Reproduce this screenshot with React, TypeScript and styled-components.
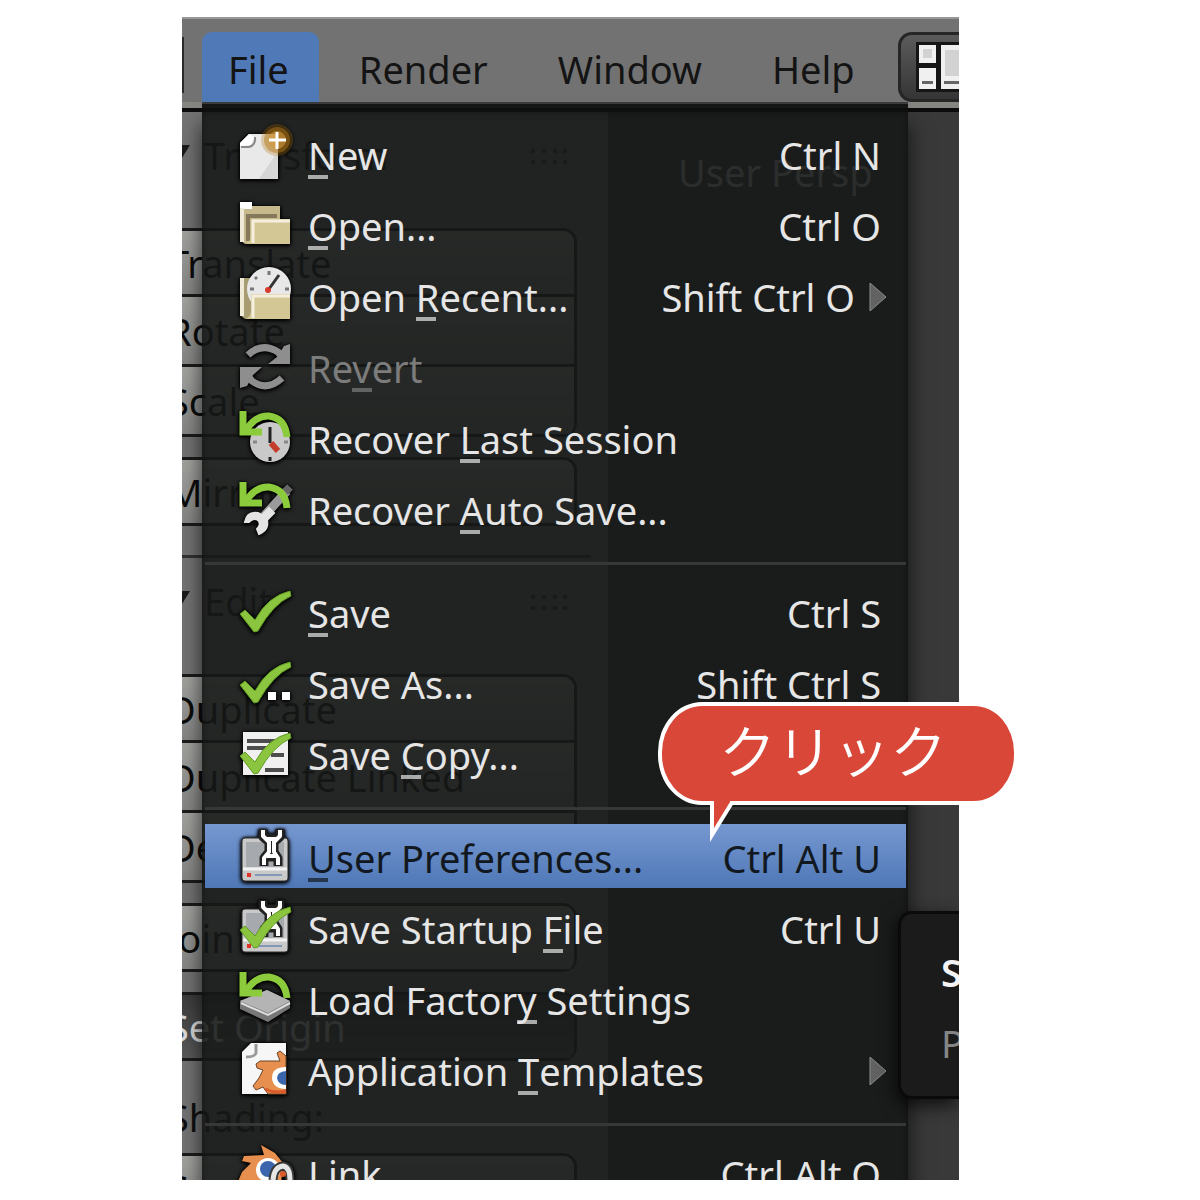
import React from "react";
import styled, { createGlobalStyle } from "styled-components";

const GlobalStyle = createGlobalStyle`
  *, *::before, *::after { box-sizing: border-box; }
  body { margin: 0; background: #fff; }
  button { border: 0; background: none; padding: 0; margin: 0; color: inherit; font: inherit; text-align: left; }
`;

const Page = styled.main`
  min-height: 100vh;
  padding: 17px 241px 20px 182px;
  background: #fff;
  font-family: "Noto Sans", "Open Sans", sans-serif;
  font-size: 38px;
  line-height: 52px;
  white-space: nowrap;
`;

const Stage = styled.div`
  position: relative;
`;

const AppWindow = styled.div`
  position: relative;
  display: flex;
  flex-direction: column;
  height: calc(100vh - 37px);
  overflow: hidden;
  background: #393939;
`;

/* ---------- header ---------- */

const Header = styled.header`
  position: relative;
  z-index: 2;
  display: flex;
  align-items: flex-end;
  flex: none;
  height: 85px;
  background: #727272;
  border-top: 2px solid #979797;
`;

const HeaderEdge = styled.div`
  flex: none;
  height: 10px;
  background: #858582;
  border-bottom: 4px solid #0c0c0c;
`;

const EditorSwitch = styled.div`
  width: 20px;
  height: 56px;
  margin-bottom: 9px;
  border-left: 2px solid #2a2a2a;
`;

const MenuBar = styled.nav`
  display: flex;
  gap: 14px;
`;

const MenuSlot = styled.div`
  position: relative;
`;

const MenuTab = styled.button<{ $open?: boolean }>`
  height: 70px;
  padding: 4px 30px 0 26px;
  color: #141414;
  background: ${(p) => (p.$open ? "#5079b8" : "transparent")};
  border-radius: 10px 10px 0 0;
`;

const LayoutPicker = styled.button`
  display: flex;
  align-items: center;
  width: 61px;
  height: 70px;
  margin-left: auto;
  padding-left: 15px;
  overflow: hidden;
  border: 3px solid #262626;
  border-right: 0;
  border-radius: 14px 0 0 14px;
  background: linear-gradient(#5a5b5a, #353535);
`;

const LayoutIcon = styled.svg`
  flex: none;
  width: 60px;
  height: 50px;
`;

/* ---------- file menu ---------- */

const Menu = styled.ul`
  position: absolute;
  top: 100%;
  left: 0;
  display: flex;
  flex-direction: column;
  gap: 7px;
  width: 706px;
  margin: 0;
  padding: 17px 2px 40px 3px;
  list-style: none;
  background: rgba(22, 24, 23, 0.88);
  border-top: 2px solid #3a3b3a;
  box-shadow: 0 22px 20px rgba(0, 0, 0, 0.7), inset 0 8px 6px rgba(0, 0, 0, 0.4);
`;

const MenuRow = styled.button<{ $active?: boolean }>`
  display: flex;
  align-items: center;
  width: 100%;
  height: 64px;
  padding: 0 19px 0 32px;
  color: ${(p) => (p.$active ? "#121820" : "#e6e6e6")};
  background: ${(p) => (p.$active ? "linear-gradient(#7698d0, #4f78b7)" : "transparent")};
  &:disabled { color: #7c7c7c; }
`;

const Label = styled.span`
  flex: 1;
  padding: 4px 0 0 15px;
`;

const Hotkey = styled.u`
  position: relative;
  text-decoration: none;
  &::after {
    content: "";
    position: absolute;
    left: 0;
    bottom: 2px;
    width: 20px;
    height: 4px;
    background: currentColor;
    opacity: 0.7;
  }
`;

const Shortcut = styled.kbd<{ $submenu?: boolean }>`
  padding: 4px ${(p) => (p.$submenu ? 0 : 6)}px 0 0;
  font: inherit;
`;

const Divider = styled.li`
  height: 3px;
  margin: 15px 0 7px;
  background: #363737;
`;

const IconBox = styled.svg`
  flex: none;
  width: 56px;
  height: 56px;
  overflow: visible;
  filter: drop-shadow(0 1px 2px #000) drop-shadow(0 0 1px #000);
`;

const ArrowBox = styled.svg`
  flex: none;
  width: 32px;
  height: 38px;
`;

/* ---------- workspace behind the menu ---------- */

const Workspace = styled.div`
  display: flex;
  flex: 1;
  min-height: 0;
`;

const ToolShelf = styled.aside`
  flex: none;
  width: 466px;
  margin-left: -40px;
  padding-right: 31px;
  color: #101010;
  background: #727372;
`;

const ShelfTitle = styled.h2`
  display: flex;
  align-items: center;
  gap: 14px;
  height: 86px;
  margin: 0 0 30px;
  padding: 0 8px 0 26px;
  font: inherit;
`;

const ShelfTitleText = styled.span`
  flex: 1;
`;

const ShelfLine = styled.hr`
  height: 3px;
  margin: 29px -14px 0 0;
  border: 0;
  background: #333;
`;

const ToolGroup = styled.div`
  margin-bottom: 20px;
  overflow: hidden;
  border: solid #1c1c1c;
  border-width: 3px 3px 0;
  border-radius: 14px;
`;

const Tool = styled.button<{ $dark?: boolean }>`
  display: block;
  width: 100%;
  height: 70px;
  padding-left: 23px;
  color: ${(p) => (p.$dark ? "#dcdcdc" : "#0c0c0c")};
  background: ${(p) => (p.$dark ? "linear-gradient(#3c3c3c, #5a5a5a)" : "linear-gradient(#a3a3a0, #868785)")};
  border-bottom: 3px solid #1c1c1c;
  &:first-child { height: 66px; }
`;

const ShelfCaption = styled.p`
  margin: 0;
  padding: 10px 0 10px 26px;
`;

const Viewport = styled.section`
  flex: 1;
  padding: 34px 0 0 70px;
  color: #c4c4c4;
  background: #393939;
`;

/* ---------- overlays ---------- */

const Tooltip = styled.div`
  position: absolute;
  z-index: 3;
  right: 0;
  top: 894px;
  width: 61px;
  height: 188px;
  padding: 32px 0 0 40px;
  overflow: hidden;
  color: #f4f4f4;
  background: #1b1b1b;
  border: 3px solid #0a0a0a;
  border-right: 0;
  border-radius: 14px 0 0 14px;
  box-shadow: -2px 6px 18px rgba(0, 0, 0, 0.75);
`;

const TooltipNote = styled.p`
  margin: 19px 0 0;
  color: #858585;
`;

const TooltipTitle = styled.p`
  margin: 0;
  font-weight: 600;
`;

const Callout = styled.div`
  position: absolute;
  z-index: 4;
  left: 476px;
  top: 685px;
  width: 360px;
  height: 103px;
  padding-right: 10px;
  color: #fff;
  background: #d94738;
  border: 4px solid #fff;
  border-radius: 44px / 50px;
  font-family: "Noto Sans CJK JP", sans-serif;
  font-size: 57px;
  font-weight: 350;
  line-height: 84px;
  text-align: center;
`;

const CalloutTail = styled.svg`
  position: absolute;
  left: 48px;
  top: 93px;
  width: 26px;
  height: 44px;
`;

/* ---------- icon drawings ---------- */

const Tick = () => (
  <path d="M3 31 L8 27 L18 37 Q31 13 53 8 L54 13 Q36 21 21 48 L17 49 Z" fill="#8bc53f" stroke="#5f9a22" strokeWidth="1" />
);

const BackArrow = () => (
  <g fill="none" stroke="#8bcb3c" strokeWidth="7">
    <path d="M9 21 Q19 6 32 7 Q48 9 50 28" />
    <path d="M6 2 V23 H25" />
    <path d="M3 26 V12 L20 26 Z" fill="#8bcb3c" stroke="none" />
  </g>
);

const FolderFront = ({ y }: { y: number }) => (
  <g>
    <path d={`M14 ${y} H53 V${y + 25} H8 Q14 ${y + 23} 14 ${y + 16} Z`} fill="#d3c795" />
    <path d={`M16 ${y + 24} V${y + 2} H53`} fill="none" stroke="#f6efdf" strokeWidth="3" />
  </g>
);

const Drive = () => (
  <g>
    <rect x="5" y="10" width="46" height="43" rx="3" fill="#c9c9c9" stroke="#333" strokeWidth="1" />
    <rect x="9" y="14" width="38" height="25" fill="#a6a9ad" />
    <path d="M6 41 H50" stroke="#f2f2f2" strokeWidth="3" />
    <path d="M18 47 H45" stroke="#8398b8" strokeWidth="2" />
    <rect x="10" y="45" width="4" height="4" fill="#e03226" />
  </g>
);

const UprightWrench = () => (
  <g fill="none" strokeLinejoin="round">
    <path d="M26 1 V9 L32 14 V24 L27 30 V38 M43 1 V9 L37 14 V24 L41 30 V38 M27 10 H42 M28 29 H41" stroke="#222" strokeWidth="9" />
    <path d="M26 2 V8 L32 14 V24 L27 30 V37 M43 2 V8 L37 14 V24 L41 30 V37 M29 11 H40 M30 28 H39" stroke="#fff" strokeWidth="4" />
  </g>
);

const icons: Record<string, React.ReactNode> = {
  fresh: (
    <g>
      <path d="M12 9 H41 V54 H3 V18 Z" fill="#e9e9e9" />
      <path d="M22 54 L41 26 V54 Z" fill="#d6d6d6" />
      <path d="M12 9 L17 12 L14 20 L3 21 V18 Z" fill="#fff" />
      <path d="M18 12 Q19 20 12 22 H4" fill="none" stroke="#8a8a8a" strokeWidth="2" />
      <circle cx="40" cy="15" r="16" fill="#b57a1c" opacity="0.3" />
      <circle cx="40" cy="15" r="13" fill="#b57a1c" opacity="0.5" />
      <circle cx="40" cy="15" r="9" fill="#d19a3e" opacity="0.6" />
      <path d="M32 15 H49 M40 7 V24" stroke="#fff" strokeWidth="3" />
    </g>
  ),
  folder: (
    <g>
      <path d="M3 7 H15 V10 H43 V40 L8 48 L3 44 Z" fill="#c6b98c" />
      <rect x="3" y="6" width="12" height="7" fill="#fff" />
      <path d="M5 12 V46" stroke="#efe9d8" strokeWidth="4" />
      <path d="M11 45 V20 H40" fill="none" stroke="#84795a" strokeWidth="4" />
      <FolderFront y={23} />
    </g>
  ),
  recent: (
    <g>
      <path d="M3 11 H14 V50 L8 52 L3 48 Z" fill="#a89c72" />
      <path d="M5 11 V49" stroke="#efe9d8" strokeWidth="4" />
      <circle cx="32" cy="22" r="22" fill="#e8e8e8" />
      <path d="M32 4 V8 M18 10 L20 12 M48 22 H52 M13 22 H17" stroke="#777" strokeWidth="3" />
      <path d="M32 22 L42 8" stroke="#333" strokeWidth="3" />
      <circle cx="31" cy="23" r="3" fill="#d63b2b" />
      <FolderFront y={27} />
    </g>
  ),
  revert: (
    <g fill="none" stroke="#8e8e8e" strokeWidth="7">
      <path d="M11 17 Q25 4 41 14 L46 20" />
      <path d="M53 6 V26 H31 L40 19 L47 8 Z" fill="#8e8e8e" stroke="none" />
      <path d="M45 40 Q30 54 15 43 L10 37" />
      <path d="M3 50 V29 H25 L16 37 L10 48 Z" fill="#8e8e8e" stroke="none" />
    </g>
  ),
  session: (
    <g>
      <circle cx="33" cy="33" r="20" fill="#c9c9c9" />
      <path d="M33 18 V34 M33 48 V52" stroke="#222" strokeWidth="3" />
      <path d="M16 33 H20 M47 33 H51" stroke="#888" strokeWidth="3" />
      <path d="M34 34 L41 42" stroke="#c43c2c" strokeWidth="6" />
      <BackArrow />
    </g>
  ),
  autosave: (
    <g>
      <path d="M27 36 L50 11" stroke="#9a9a9a" strokeWidth="9" />
      <path d="M48 12 L53 7" stroke="#666" strokeWidth="8" />
      <path d="M8 42 Q10 31 21 33 L25 35 L32 28 L37 33 L30 40 Q32 50 22 54 L20 49 Q25 44 21 40 Q16 37 12 42 Z" fill="#e4e4e4" stroke="#e4e4e4" strokeWidth="2" />
      <BackArrow />
    </g>
  ),
  save: <Tick />,
  saveAs: (
    <g>
      <rect x="31" y="38" width="8" height="8" fill="#fff" />
      <rect x="45" y="38" width="8" height="8" fill="#fff" />
      <Tick />
    </g>
  ),
  saveCopy: (
    <g>
      <rect x="6" y="7" width="45" height="43" fill="#f0f0f0" />
      <path d="M10 16 H38 M10 23 H30 M34 30 H47 M28 45 H47" stroke="#4d4d4d" strokeWidth="4" />
      <Tick />
    </g>
  ),
  prefs: (
    <g>
      <Drive />
      <UprightWrench />
    </g>
  ),
  startup: (
    <g>
      <Drive />
      <UprightWrench />
      <Tick />
    </g>
  ),
  factory: (
    <g>
      <path d="M3 31 L30 20 L53 31 V38 L31 52 L3 39 Z" fill="#777" />
      <path d="M3 31 L30 20 L53 31 L31 43 Z" fill="#b4b4b4" />
      <path d="M4 33 L31 45 L53 33" fill="none" stroke="#dedede" strokeWidth="2" />
      <BackArrow />
    </g>
  ),
  templates: (
    <g>
      <path d="M14 2 H49 V53 H5 V11 Z" fill="#f6f6f6" />
      <path d="M19 3 V12 Q18 16 9 16" fill="none" stroke="#999" strokeWidth="3" />
      <path d="M49 15 L43 10 L40 12 L43 20 L23 20 L19 23 L20 27 L26 29 L22 37 L16 45 L19 49 L26 46 L31 53 H49 Z" fill="#e78f4e" stroke="#6b4428" strokeWidth="1" />
      <path d="M28 48 Q38 53 49 50" fill="none" stroke="#d95a2b" strokeWidth="3" />
      <path d="M49 26 Q35 26 35 37 Q36 48 49 48 Z" fill="#fff" />
      <path d="M49 30 Q40 31 40 37 Q41 44 49 44 Z" fill="#3b66ab" />
    </g>
  ),
  link: (
    <g>
      <path d="M24 1 L38 9 L46 19 L44 40 H0 L5 28 L14 19 L5 17 L7 12 L27 11 Z" fill="#e78f4e" />
      <circle cx="31" cy="26" r="12" fill="#fff" />
      <circle cx="31" cy="25" r="8" fill="#3b66ab" />
      <path d="M36 36 Q37 23 46 22 Q53 23 53 36" fill="none" stroke="#3a3a3a" strokeWidth="9" />
      <path d="M36 36 Q37 23 46 22 Q53 23 53 36" fill="none" stroke="#e6e6e6" strokeWidth="5" />
      <circle cx="46" cy="30" r="3" fill="#d95a2b" />
    </g>
  ),
};

type Entry = {
  icon: string;
  before?: string;
  key?: string;
  after?: string;
  shortcut?: string;
  submenu?: boolean;
  disabled?: boolean;
  active?: boolean;
};

const entries: (Entry | null)[] = [
  { icon: "fresh", key: "N", after: "ew", shortcut: "Ctrl N" },
  { icon: "folder", key: "O", after: "pen...", shortcut: "Ctrl O" },
  { icon: "recent", before: "Open ", key: "R", after: "ecent...", shortcut: "Shift Ctrl O", submenu: true },
  { icon: "revert", before: "Re", key: "v", after: "ert", disabled: true },
  { icon: "session", before: "Recover ", key: "L", after: "ast Session" },
  { icon: "autosave", before: "Recover ", key: "A", after: "uto Save..." },
  null,
  { icon: "save", key: "S", after: "ave", shortcut: "Ctrl S" },
  { icon: "saveAs", before: "Save As...", shortcut: "Shift Ctrl S" },
  { icon: "saveCopy", before: "Save ", key: "C", after: "opy..." },
  null,
  { icon: "prefs", key: "U", after: "ser Preferences...", shortcut: "Ctrl Alt U", active: true },
  { icon: "startup", before: "Save Startup ", key: "F", after: "ile", shortcut: "Ctrl U" },
  { icon: "factory", before: "Load Factor", key: "y", after: " Settings" },
  { icon: "templates", before: "Application ", key: "T", after: "emplates", submenu: true },
  null,
  { icon: "link", before: "Link", shortcut: "Ctrl Alt O" },
];

const SubmenuArrow = () => (
  <ArrowBox viewBox="0 0 32 38" aria-hidden="true">
    <path d="M15 7 L31 21 L15 35 Z" fill="#626262" stroke="#8c8c8c" strokeWidth="1" />
  </ArrowBox>
);

const Grip = () => (
  <svg width="40" height="20" viewBox="0 0 40 20" aria-hidden="true">
    {[0, 11, 22, 32].map((x) => (
      <g key={x} fill="#333">
        <rect x={x + 2} y="4" width="4" height="4" />
        <rect x={x + 2} y="15" width="4" height="4" />
      </g>
    ))}
  </svg>
);

const Triangle = () => (
  <svg width="22" height="20" viewBox="0 0 22 20" aria-hidden="true">
    <path d="M0 0 H22 L11 18 Z" fill="#1a1a1a" />
  </svg>
);

function ShelfHeading({ children }: { children: string }) {
  return (
    <ShelfTitle>
      <Triangle />
      <ShelfTitleText>{children}</ShelfTitleText>
      <Grip />
    </ShelfTitle>
  );
}

function FileMenu() {
  return (
    <Menu>
      {entries.map((e, i) =>
        e === null ? (
          <Divider key={i} />
        ) : (
          <li key={i}>
            <MenuRow $active={e.active} disabled={e.disabled}>
              <IconBox viewBox="0 0 56 56" aria-hidden="true">{icons[e.icon]}</IconBox>
              <Label>
                {e.before}
                {e.key && <Hotkey>{e.key}</Hotkey>}
                {e.after}
              </Label>
              {e.shortcut && <Shortcut $submenu={e.submenu}>{e.shortcut}</Shortcut>}
              {e.submenu && <SubmenuArrow />}
            </MenuRow>
          </li>
        )
      )}
    </Menu>
  );
}

export default function App() {
  return (
    <Page>
      <GlobalStyle />
      <Stage>
        <AppWindow>
          <Header>
            <EditorSwitch />
            <MenuBar>
              <MenuSlot>
                <MenuTab $open aria-expanded="true">File</MenuTab>
                <FileMenu />
              </MenuSlot>
              {["Render", "Window", "Help"].map((name) => (
                <MenuSlot key={name}>
                  <MenuTab>{name}</MenuTab>
                </MenuSlot>
              ))}
            </MenuBar>
            <LayoutPicker aria-label="Screen layout">
              <LayoutIcon viewBox="0 0 60 50" aria-hidden="true">
                <rect width="60" height="50" fill="#151515" />
                <rect x="3" y="3" width="17" height="18" fill="#f0f0f0" />
                <rect x="7" y="7" width="9" height="9" fill="#d2d2d2" />
                <rect x="3" y="26" width="17" height="21" fill="#f0f0f0" />
                <rect x="6" y="39" width="11" height="3" fill="#666" />
                <rect x="25" y="3" width="32" height="44" fill="#f0f0f0" />
                <rect x="29" y="8" width="26" height="26" fill="#d2d2d2" />
                <rect x="28" y="39" width="28" height="3" fill="#666" />
              </LayoutIcon>
            </LayoutPicker>
          </Header>
          <HeaderEdge />
          <Workspace>
            <ToolShelf>
              <ShelfHeading>Transform</ShelfHeading>
              <ToolGroup>
                <Tool>Translate</Tool>
                <Tool>Rotate</Tool>
                <Tool>Scale</Tool>
              </ToolGroup>
              <ToolGroup>
                <Tool>Mirror</Tool>
              </ToolGroup>
              <ShelfLine />
              <ShelfHeading>Edit</ShelfHeading>
              <ToolGroup>
                <Tool>Duplicate</Tool>
                <Tool>Duplicate Linked</Tool>
                <Tool>Delete</Tool>
              </ToolGroup>
              <ToolGroup>
                <Tool>Join</Tool>
              </ToolGroup>
              <ToolGroup>
                <Tool $dark>Set Origin</Tool>
              </ToolGroup>
              <ShelfCaption>Shading:</ShelfCaption>
              <ToolGroup>
                <Tool>Smooth</Tool>
              </ToolGroup>
            </ToolShelf>
            <Viewport>User Persp</Viewport>
          </Workspace>
          <Tooltip role="tooltip">
            <TooltipTitle>S</TooltipTitle>
            <TooltipNote>P</TooltipNote>
          </Tooltip>
        </AppWindow>
        <Callout>
          クリック
          <CalloutTail viewBox="0 0 26 44" aria-hidden="true">
            <path d="M0 4 V43 L24 4 Z" fill="#fff" />
            <path d="M4 0 V29 L20 3 V0 Z" fill="#d94738" />
          </CalloutTail>
        </Callout>
      </Stage>
    </Page>
  );
}
